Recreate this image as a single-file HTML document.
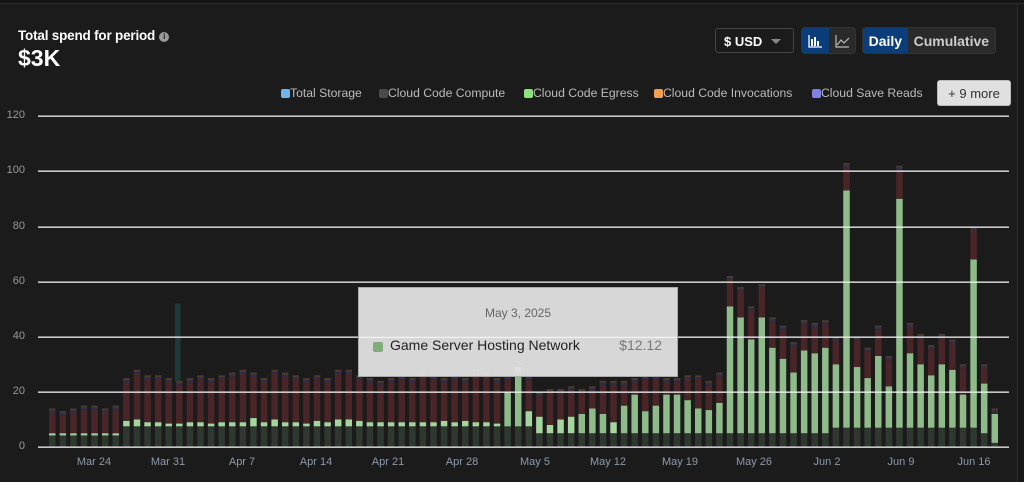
<!DOCTYPE html>
<html><head><meta charset="utf-8">
<style>
*{margin:0;padding:0;box-sizing:border-box}
body{width:1024px;height:482px;background:#1b1b1b;font-family:"Liberation Sans",sans-serif;position:relative;overflow:hidden;color:#fff}
.topbar{position:absolute;left:0;top:0;width:1024px;height:4px;background:#131313;border-bottom:1px solid #2c2c2c}
.rightbar{position:absolute;left:1017px;top:4px;width:7px;height:478px;background:#161616;border-left:1px solid #2c2c2c}
.t1{position:absolute;left:18px;top:28px;font-size:13.5px;font-weight:bold;color:#fff;letter-spacing:-0.2px}
.info{display:inline-block;width:10px;height:10px;border-radius:50%;background:#999;color:#1b1b1b;font-size:8px;text-align:center;line-height:10px;vertical-align:1px;margin-left:4px}
.t2{position:absolute;left:18px;top:45px;font-size:23px;font-weight:bold;color:#fff}
.sel{position:absolute;left:715px;top:28px;width:79px;height:25px;border:1px solid #444;border-radius:3px;font-size:13px;font-weight:bold;color:#fff;padding:5px 0 0 8px}
.sel .ar{position:absolute;right:12px;top:10px;width:0;height:0;border-left:5px solid transparent;border-right:5px solid transparent;border-top:5px solid #888}
.grp{position:absolute;top:27px;height:27px;border:1px solid #333;border-radius:4px;background:#2a2a2a;overflow:hidden;display:flex}
.grp div{height:100%;font-size:14px;font-weight:bold;color:#ccc;display:flex;align-items:center;justify-content:center}
.grp .on{background:#0b3d7a;color:#fff}
.leg{position:absolute;top:86px;font-size:12.2px;color:#bbb;white-space:nowrap}
.leg i{display:inline-block;width:9px;height:9px;border-radius:2px;vertical-align:-1px}
.more{position:absolute;left:937px;top:80px;width:74px;height:26px;background:#e0e0e0;border-radius:3px;color:#333;font-size:13px;text-align:center;line-height:26px;border:1px solid #bbb}
.yl{position:absolute;left:0;width:25px;text-align:right;font-size:11px;color:#999}
.xl{position:absolute;top:456px;font-size:11px;color:#8b9aab;white-space:nowrap;transform:translateX(-50%)}
.tip{position:absolute;left:358px;top:287px;width:320px;height:90px;background:rgba(226,226,226,0.95);border:1px solid #aaa}
.tip .d{position:absolute;top:18px;width:100%;text-align:center;font-size:12px;color:#666}
.tip .sq{position:absolute;left:14px;top:54px;width:10px;height:10px;border-radius:2px;background:#7fae79}
.tip .n{position:absolute;left:31px;top:49px;font-size:14px;color:#222}
.tip .v{position:absolute;right:15px;top:49px;font-size:14px;color:#777}
.tip .ln{position:absolute;left:0;top:49px;width:100%;height:1px;background:#f4f4f4}
</style></head><body>
<div class="topbar"></div>
<div class="rightbar"></div>
<div class="t1">Total spend for period<span class="info">i</span></div>
<div class="t2">$3K</div>
<div class="sel">$ USD<span class="ar"></span></div>
<div class="grp" style="left:801px;width:55px">
 <div class="on" style="width:27px"><svg width="16" height="14"><path d="M2 1v12h13" stroke="#fff" fill="none" stroke-width="1.3"/><path d="M5 5v7M8 3v9M11 7v5" stroke="#fff" stroke-width="2"/></svg></div>
 <div style="width:27px"><svg width="16" height="14"><path d="M2 1v12h13" stroke="#bbb" fill="none" stroke-width="1.2"/><path d="M3 11l4-5 3 3 5-5" stroke="#bbb" fill="none" stroke-width="1.2"/></svg></div>
</div>
<div class="grp" style="left:862px;width:134px">
 <div class="on" style="width:45px">Daily</div>
 <div style="width:88px">Cumulative</div>
</div>
<div class="leg" style="left:281px"><i style="background:#6fb6f0"></i>Total Storage</div>
<div class="leg" style="left:379px"><i style="background:#4a4a4a"></i>Cloud Code Compute</div>
<div class="leg" style="left:524px"><i style="background:#8fe07f"></i>Cloud Code Egress</div>
<div class="leg" style="left:654px"><i style="background:#f0a050"></i>Cloud Code Invocations</div>
<div class="leg" style="left:812px"><i style="background:#7f7fe6"></i>Cloud Save Reads</div>
<div class="more">+ 9 more</div>
<div class="yl" style="top:109px">120</div>
<div class="yl" style="top:164px">100</div>
<div class="yl" style="top:220px">80</div>
<div class="yl" style="top:275px">60</div>
<div class="yl" style="top:330px">40</div>
<div class="yl" style="top:385px">20</div>
<div class="yl" style="top:440px">0</div>
<svg id="ch" width="1024" height="482" style="position:absolute;left:0;top:0"></svg>
<div class="xl" style="left:94px">Mar 24</div>
<div class="xl" style="left:168px">Mar 31</div>
<div class="xl" style="left:242px">Apr 7</div>
<div class="xl" style="left:316px">Apr 14</div>
<div class="xl" style="left:388px">Apr 21</div>
<div class="xl" style="left:462px">Apr 28</div>
<div class="xl" style="left:535px">May 5</div>
<div class="xl" style="left:608px">May 12</div>
<div class="xl" style="left:680px">May 19</div>
<div class="xl" style="left:754px">May 26</div>
<div class="xl" style="left:827px">Jun 2</div>
<div class="xl" style="left:901px">Jun 9</div>
<div class="xl" style="left:974px">Jun 16</div>
<div class="tip"><div class="d">May 3, 2025</div><div class="ln"></div><div class="sq"></div><div class="n">Game Server Hosting Network</div><div class="v">$12.12</div></div>
<script>
(function(){
var T=[],G=[],B=[],i;
var t0=[14,13,14,15,15,14,15];for(i=0;i<7;i++){T.push(t0[i]);G.push(5);B.push(4.2);}
var t1=[25,28,26,26,25,24,25,26,25,26,27,28,27,25,28,27,26,25,26,25,28,28,26,25,24,25,26,25,27,26,25,26,25,28,27,25,26,27];
var g1=[9.5,10,9,9,8.5,8.5,9,9,8.5,9,9,9,10.5,9,10,9,9,8.5,9.5,9,10,10,9.5,9,9,9,9,9,9,9,9.5,9,9.5,9,9,8.5,20,29];
for(i=0;i<t1.length;i++){T.push(t1[i]);G.push(g1[i]);B.push(7.5);}
T.push(26);G.push(13);B.push(7.5);
var t2=[20,21,21,22,21,22,24,24,24,25,26,26,25,25,26,26];
var g2=[11,8,10,11,12,14,12,9,15,19,13,15,19,19,17,14];
for(i=0;i<16;i++){T.push(t2[i]);G.push(g2[i]);B.push(5);}
var t3=[24,27,62,58,51,59,47,44,38,46,45,46,40,103,40,36,44,33,102,45,41,37,41,39,30,80,30,14];
var g3=[13.4,16,51,47,39,47,36,32,27,35,34,36,30,93,29,25,33,22,90,34,30,26,30,28,19,68,23,12];
for(i=0;i<t3.length;i++){T.push(t3[i]);G.push(g3[i]);B.push(i<12?5:(i==26?5:(i==27?1.5:7)));}
var s='',k=2.758,z=447;
function Y(v){return z-v*k}
for(i=0;i<T.length;i++){
 var x=52+i*10.59-3,w=6.5;
 s+='<rect x="'+x+'" y="'+Y(B[i])+'" width="'+w+'" height="'+(B[i]*k)+'" fill="#2e382f"/>';
 s+='<rect x="'+x+'" y="'+Y(G[i])+'" width="'+w+'" height="'+((G[i]-B[i])*k)+'" fill="'+(G[i]-B[i]>6?'#8ebb89':'#a5d49f')+'"/>';
 var tp=T[i]-1.5;
 s+='<rect x="'+x+'" y="'+Y(tp)+'" width="'+w+'" height="'+((tp-G[i])*k)+'" fill="#4a2527"/>';
 s+='<rect x="'+x+'" y="'+Y(T[i]-0.7)+'" width="'+w+'" height="'+(0.8*k)+'" fill="#2c2f4e"/>';
 s+='<rect x="'+x+'" y="'+Y(T[i])+'" width="'+w+'" height="'+(0.7*k)+'" fill="#4e3a2c"/>';
}
s+='<rect x="175" y="'+Y(52)+'" width="5.5" height="'+(28*k)+'" fill="#1c3a3a"/>';
var gy=[116,171,227,282,337,392,447];
for(i=0;i<gy.length;i++)s+='<rect x="38" y="'+(gy[i]-0.5)+'" width="971" height="1.3" fill="#f2f2f2"/>';
document.getElementById('ch').innerHTML=s;
})();
</script>
</body></html>
